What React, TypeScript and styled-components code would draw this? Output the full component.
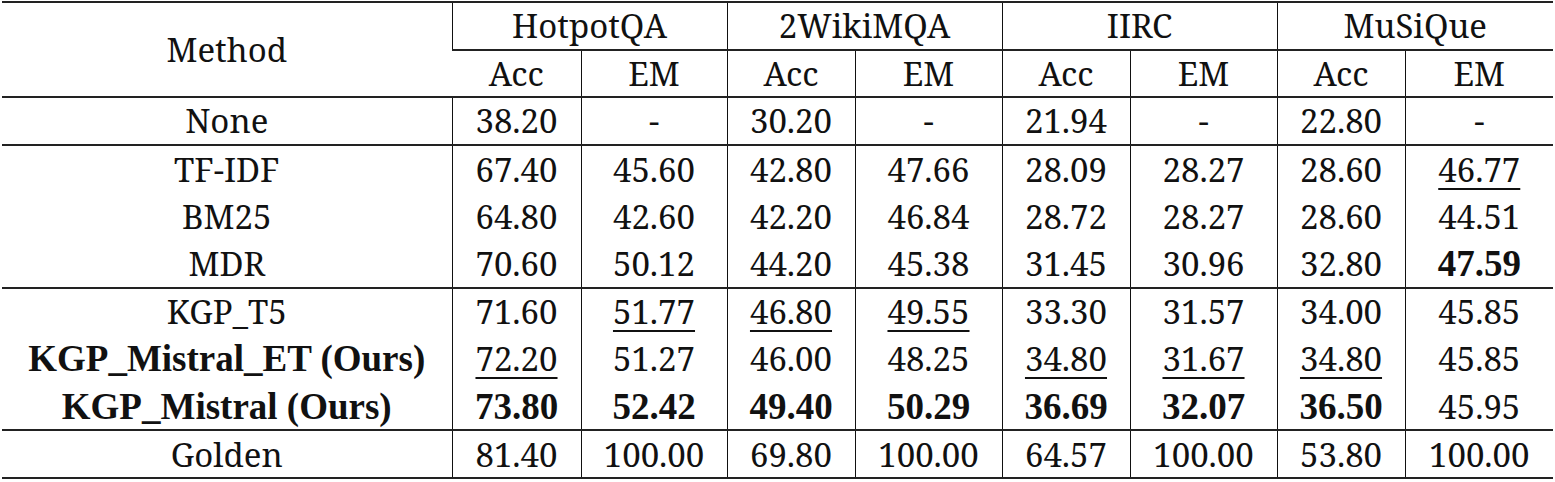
import React from 'react';
import styled, { createGlobalStyle, css } from 'styled-components';

const GlobalStyle = createGlobalStyle`
  html, body {
    margin: 0;
    padding: 0;
    background: #fff;
  }
  body {
    font-family: "Noto Serif", "DejaVu Serif", serif;
    color: #111;
  }
`;

// Regular Liberation Serif comes out as a sans face at this size here,
// so regular text uses Noto Serif (sized to Times widths) and bold keeps
// Liberation Serif Bold, which renders correctly.
const regular = css`
  font-family: "Noto Serif", "DejaVu Serif", serif;
  font-size: 33px;
  font-weight: normal;
`;

const bold = css`
  font-family: "Liberation Serif", "Noto Serif", serif;
  font-size: 37px;
  font-weight: bold;
`;

const Page = styled.div`
  padding: 1px 2px 0 2px;
`;

const Table = styled.table`
  border-collapse: collapse;
  width: 1551px;
  table-layout: fixed;
  color: #111;
  border-top: 2px solid #222;
  border-bottom: 2px solid #222;
`;

const Row = styled.tr<{ $rule?: boolean }>`
  height: 47.6px;
  ${(p) => (p.$rule ? 'border-top: 2px solid #222;' : '')}
`;

const HeadCell = styled.th<{ $sub?: boolean }>`
  ${regular}
  text-align: center;
  padding: 0;
  line-height: 1;
  border-left: 1px solid #111;
  ${(p) => (p.$sub ? 'border-top: 2px solid #222;' : '')}
  &:first-child {
    border-left: none;
  }
`;

const Cell = styled.td<{ $bold?: boolean }>`
  ${(p) => (p.$bold ? bold : regular)}
  text-align: center;
  padding: 0;
  line-height: 1;
  border-left: 1px solid #111;
  &:first-child {
    border-left: none;
  }
`;

const Under = styled.span`
  text-decoration: underline;
  text-decoration-thickness: 2px;
  text-underline-offset: 6px;
`;

const Bold = styled.span`
  ${bold}
`;

type Result = { method: string; ours?: boolean; values: string[] };

// "_" suffix = underlined (second best), "*" suffix = bold (best)
const groups: Result[][] = [
  [{ method: 'None', values: ['38.20', '-', '30.20', '-', '21.94', '-', '22.80', '-'] }],
  [
    { method: 'TF-IDF', values: ['67.40', '45.60', '42.80', '47.66', '28.09', '28.27', '28.60', '46.77_'] },
    { method: 'BM25', values: ['64.80', '42.60', '42.20', '46.84', '28.72', '28.27', '28.60', '44.51'] },
    { method: 'MDR', values: ['70.60', '50.12', '44.20', '45.38', '31.45', '30.96', '32.80', '47.59*'] },
  ],
  [
    { method: 'KGP_T5', values: ['71.60', '51.77_', '46.80_', '49.55_', '33.30', '31.57', '34.00', '45.85'] },
    {
      method: 'KGP_Mistral_ET (Ours)',
      ours: true,
      values: ['72.20_', '51.27', '46.00', '48.25', '34.80_', '31.67_', '34.80_', '45.85'],
    },
    {
      method: 'KGP_Mistral (Ours)',
      ours: true,
      values: ['73.80*', '52.42*', '49.40*', '50.29*', '36.69*', '32.07*', '36.50*', '45.95'],
    },
  ],
  [{ method: 'Golden', values: ['81.40', '100.00', '69.80', '100.00', '64.57', '100.00', '53.80', '100.00'] }],
];

const datasets = ['HotpotQA', '2WikiMQA', 'IIRC', 'MuSiQue'];
const widths = [450, 129, 146, 128, 147, 128, 147, 128, 148];

function Value({ raw }: { raw: string }) {
  if (raw.endsWith('_')) return <Under>{raw.slice(0, -1)}</Under>;
  if (raw.endsWith('*')) return <Bold>{raw.slice(0, -1)}</Bold>;
  return <>{raw}</>;
}

export default function App() {
  return (
    <Page>
      <GlobalStyle />
      <Table>
        <colgroup>
          {widths.map((w, i) => (
            <col key={i} style={{ width: w }} />
          ))}
        </colgroup>
        <thead>
          <Row>
            <HeadCell rowSpan={2}>Method</HeadCell>
            {datasets.map((d) => (
              <HeadCell key={d} colSpan={2}>
                {d}
              </HeadCell>
            ))}
          </Row>
          <Row>
            {datasets.map((d) => (
              <React.Fragment key={d}>
                <HeadCell $sub>Acc</HeadCell>
                <HeadCell $sub>EM</HeadCell>
              </React.Fragment>
            ))}
          </Row>
        </thead>
        <tbody>
          {groups.map((group) =>
            group.map((r, i) => (
              <Row key={r.method} $rule={i === 0}>
                <Cell $bold={r.ours}>{r.method}</Cell>
                {r.values.map((v, j) => (
                  <Cell key={j}>
                    <Value raw={v} />
                  </Cell>
                ))}
              </Row>
            ))
          )}
        </tbody>
      </Table>
    </Page>
  );
}
